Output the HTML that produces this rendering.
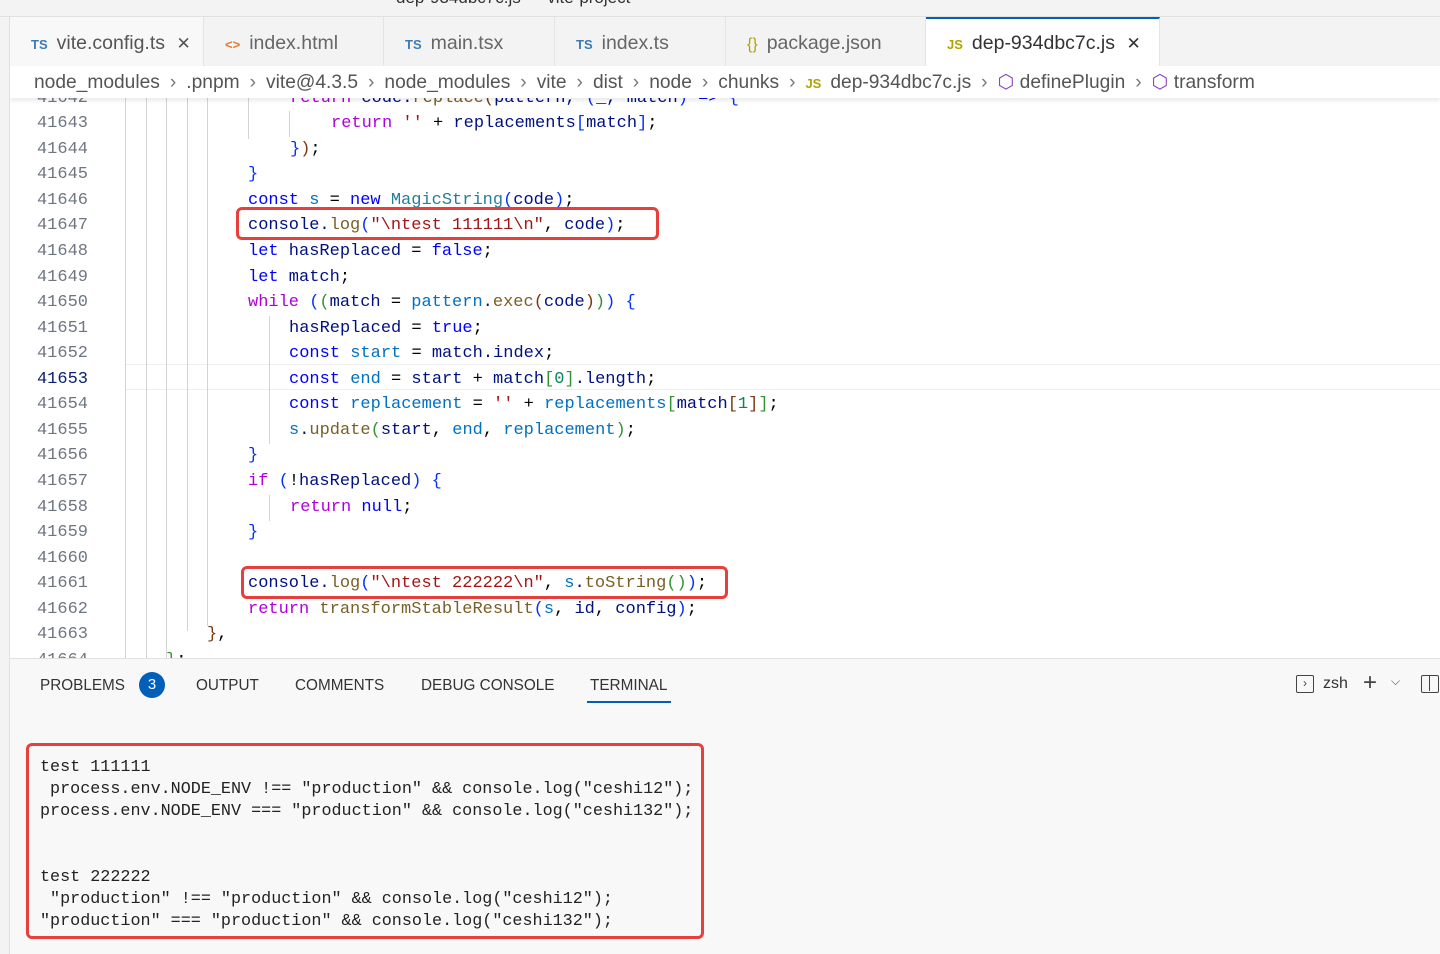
<!DOCTYPE html>
<html><head><meta charset="utf-8"><style>
*{margin:0;padding:0;box-sizing:border-box}
body{width:1440px;height:954px;overflow:hidden;background:#fff;font-family:"Liberation Sans",sans-serif;position:relative}
.abs{position:absolute}
.title{top:0;left:0;width:1440px;height:17px;background:#f3f3f3;border-bottom:1px solid #e0e0e0;overflow:hidden}
.title span{position:absolute;left:396px;top:-12px;font-size:17px;color:#333}
.tabs{top:17px;left:10px;width:1430px;height:49px;background:#f3f3f3}
.tab{position:absolute;top:0;height:49px;border-right:1px solid #e4e4e4;font-size:19.5px;color:#666;line-height:52px;padding-left:21px;white-space:nowrap;overflow:hidden}
.tab.act{background:#fff;color:#333;border-top:2px solid #005fb8;line-height:48px}
.ic{font-size:13px;font-weight:bold;margin-right:9px}
.ts{color:#3b7bb5}.js{color:#b3a100}
.crumbs{top:66px;left:10px;width:1430px;height:32px;background:#fff;font-size:19.2px;color:#555;line-height:34px;padding-left:24px;white-space:nowrap;box-shadow:0 3px 4px rgba(0,0,0,.08);z-index:3;overflow:hidden}
.sep{color:#777;margin:0 10px}
.cube{color:#8a3fbf}
.leftstrip{top:17px;left:0;width:10px;height:937px;background:#f3f3f3;border-right:1px solid #e0e0e0;z-index:4}
.editor{top:98px;left:10px;width:1430px;height:560px;overflow:hidden}
.ln{position:absolute;left:0;width:78px;text-align:right;font:17px "Liberation Mono",monospace;color:#6e7681}
.code{position:absolute;font:17px "Liberation Mono",monospace;white-space:pre;color:#001080}
.g{position:absolute;width:1px;background:#d3d3d3}
.k{color:#0000ff}.p{color:#af00db}.s{color:#a31515}.f{color:#795e26}.c{color:#267f99}.n{color:#098658}.o{color:#000}.b1{color:#0431fa}.b2{color:#319331}.b3{color:#7b3814}
.box{position:absolute;border:3px solid #e5403d;border-radius:6px}
.panel{top:658px;left:10px;width:1430px;height:296px;background:#f8f8f8;border-top:1px solid #e0e0e0}
.ptab{position:absolute;top:18px;font-size:15.3px;color:#333}
.term{position:absolute;left:30px;font:16.75px "Liberation Mono",monospace;white-space:pre;color:#222;line-height:22px}
</style></head><body>
<div class="abs title"><span>dep-934dbc7c.js — vite-project</span></div>
<div class="abs leftstrip"></div>
<div class="abs tabs">
 <div class="tab" style="left:0;width:194px;color:#555;background:#f8f8f8"><span class="ic ts">TS</span>vite.config.ts <span style="margin-left:6px;color:#555;font-size:17px">✕</span></div>
 <div class="tab" style="left:194px;width:180px"><span class="ic" style="color:#e37933">&lt;&gt;</span>index.html</div>
 <div class="tab" style="left:374px;width:171px"><span class="ic ts">TS</span>main.tsx</div>
 <div class="tab" style="left:545px;width:171px"><span class="ic ts">TS</span>index.ts</div>
 <div class="tab" style="left:716px;width:200px"><span class="ic js" style="font-size:16px;font-weight:normal">{}</span>package.json</div>
 <div class="tab act" style="left:916px;width:234px"><span class="ic js">JS</span>dep-934dbc7c.js <span style="margin-left:6px;color:#333;font-size:17px">✕</span></div>
</div>
<div class="abs crumbs">node_modules<span class="sep">›</span>.pnpm<span class="sep">›</span>vite@4.3.5<span class="sep">›</span>node_modules<span class="sep">›</span>vite<span class="sep">›</span>dist<span class="sep">›</span>node<span class="sep">›</span>chunks<span class="sep">›</span><span class="ic js">JS</span>dep-934dbc7c.js<span class="sep">›</span><span class="cube">⬡</span> definePlugin<span class="sep">›</span><span class="cube">⬡</span> transform</div>

<div class="abs editor">
 <div class="abs" style="left:116px;top:266px;width:1314px;height:26px;border-top:1px solid #eee;border-bottom:1px solid #eee"></div>
 <div class="g" style="left:115px;top:0;height:560px"></div>
 <div class="g" style="left:136px;top:0;height:560px"></div>
 <div class="g" style="left:156px;top:0;height:560px"></div>
 <div class="g" style="left:177px;top:0;height:533px"></div>
 <div class="g" style="left:197px;top:0;height:528px"></div>
 <div class="g" style="left:238px;top:0;height:41px"></div>
 <div class="g" style="left:279px;top:13px;height:26px"></div>
 <div class="g" style="left:259px;top:218px;height:128px"></div>
 <div class="g" style="left:259px;top:397px;height:26px"></div>
 <div id="lines"></div>
 <div class="box" style="left:226px;top:109px;width:423px;height:33px"></div>
 <div class="box" style="left:231px;top:468px;width:487px;height:33px"></div>
</div>

<div class="abs panel">
 <div class="ptab" style="left:30px">PROBLEMS</div>
 <div class="abs" style="left:129px;top:13px;width:26px;height:26px;border-radius:13px;background:#005fb8;color:#fff;font-size:15px;text-align:center;line-height:26px">3</div>
 <div class="ptab" style="left:186px">OUTPUT</div>
 <div class="ptab" style="left:285px">COMMENTS</div>
 <div class="ptab" style="left:411px">DEBUG CONSOLE</div>
 <div class="ptab" style="left:580px">TERMINAL</div>
 <div class="abs" style="left:577px;top:42px;width:84px;height:2px;background:#005fb8"></div>
 <div class="abs" style="left:1286px;top:16px;width:18px;height:18px;border:1.5px solid #444;border-radius:2px;font-size:12px;line-height:14px;text-align:center;color:#444">›</div>
 <div class="abs" style="left:1313px;top:16px;font-size:16px;color:#333">zsh</div>
 <div class="abs" style="left:1353px;top:10px;font-size:24px;color:#444;font-weight:300">+</div>
 <div class="abs" style="left:1381px;top:15px;font-size:12px;color:#555">⌵</div>
 <div class="abs" style="left:1411px;top:16px;width:18px;height:18px;border:1.5px solid #444;border-radius:2px"><div style="position:absolute;left:6.5px;top:0;width:1.5px;height:15px;background:#444"></div></div>
 <div class="abs" style="left:16px;top:84px;width:678px;height:196px;border:3px solid #e5403d;border-radius:6px"></div>
 <div class="term" style="top:98px">test 111111
 process.env.NODE_ENV !== "production" &amp;&amp; console.log("ceshi12");
process.env.NODE_ENV === "production" &amp;&amp; console.log("ceshi132");


test 222222
 "production" !== "production" &amp;&amp; console.log("ceshi12");
"production" === "production" &amp;&amp; console.log("ceshi132");</div>
</div>

<script>
var L=[
[290,'<span class="p">return</span> code.<span class="f">replace</span><span class="b3">(</span>pattern, <span class="b1">(</span>_, match<span class="b1">)</span> <span class="k">=&gt;</span> <span class="b1">{</span>'],
[331,'<span class="p">return</span> <span class="s">\'\'</span> <span class="o">+</span> replacements<span class="b1">[</span>match<span class="b1">]</span><span class="o">;</span>'],
[290,'<span class="b1">}</span><span class="b3">)</span><span class="o">;</span>'],
[248,'<span class="b1">}</span>'],
[248,'<span class="k">const</span> <span style="color:#0070c1">s</span> <span class="o">=</span> <span class="k">new</span> <span class="c">MagicString</span><span class="b1">(</span>code<span class="b1">)</span><span class="o">;</span>'],
[248,'console.<span class="f">log</span><span class="b1">(</span><span class="s">"\\ntest 111111\\n"</span><span class="o">,</span> code<span class="b1">)</span><span class="o">;</span>'],
[248,'<span class="k">let</span> hasReplaced <span class="o">=</span> <span class="k">false</span><span class="o">;</span>'],
[248,'<span class="k">let</span> match<span class="o">;</span>'],
[248,'<span class="p">while</span> <span class="b1">(</span><span class="b2">(</span>match <span class="o">=</span> <span style="color:#0070c1">pattern</span>.<span class="f">exec</span><span class="b3">(</span>code<span class="b3">)</span><span class="b2">)</span><span class="b1">)</span> <span class="b1">{</span>'],
[289,'hasReplaced <span class="o">=</span> <span class="k">true</span><span class="o">;</span>'],
[289,'<span class="k">const</span> <span style="color:#0070c1">start</span> <span class="o">=</span> match.index<span class="o">;</span>'],
[289,'<span class="k">const</span> <span style="color:#0070c1">end</span> <span class="o">=</span> start <span class="o">+</span> match<span class="b2">[</span><span class="n">0</span><span class="b2">]</span>.length<span class="o">;</span>'],
[289,'<span class="k">const</span> <span style="color:#0070c1">replacement</span> <span class="o">=</span> <span class="s">\'\'</span> <span class="o">+</span> <span style="color:#0070c1">replacements</span><span class="b2">[</span>match<span class="b3">[</span><span class="n">1</span><span class="b3">]</span><span class="b2">]</span><span class="o">;</span>'],
[289,'<span style="color:#0070c1">s</span>.<span class="f">update</span><span class="b2">(</span>start<span class="o">,</span> <span style="color:#0070c1">end</span><span class="o">,</span> <span style="color:#0070c1">replacement</span><span class="b2">)</span><span class="o">;</span>'],
[248,'<span class="b1">}</span>'],
[248,'<span class="p">if</span> <span class="b1">(</span><span class="o">!</span>hasReplaced<span class="b1">)</span> <span class="b1">{</span>'],
[290,'<span class="p">return</span> <span class="k">null</span><span class="o">;</span>'],
[248,'<span class="b1">}</span>'],
[248,''],
[248,'console.<span class="f">log</span><span class="b1">(</span><span class="s">"\\ntest 222222\\n"</span><span class="o">,</span> <span style="color:#0070c1">s</span>.<span class="f">toString</span><span class="b2">()</span><span class="b1">)</span><span class="o">;</span>'],
[248,'<span class="p">return</span> <span class="f">transformStableResult</span><span class="b1">(</span><span style="color:#0070c1">s</span><span class="o">,</span> id<span class="o">,</span> config<span class="b1">)</span><span class="o">;</span>'],
[207,'<span class="b3">}</span><span class="o">,</span>'],
[166,'<span class="b2">}</span><span class="o">;</span>']];
var h='';
for(var i=0;i<L.length;i++){var t=-12.3+i*25.55;var n=41642+i;
h+='<div class="ln" style="top:'+t+'px;line-height:25px;'+(n==41653?'color:#0b216f':'')+'">'+n+'</div>';
h+='<div class="code" style="left:'+(L[i][0]-10)+'px;top:'+t+'px;line-height:25px">'+L[i][1]+'</div>';}
document.getElementById('lines').innerHTML=h;
</script>
</body></html>
